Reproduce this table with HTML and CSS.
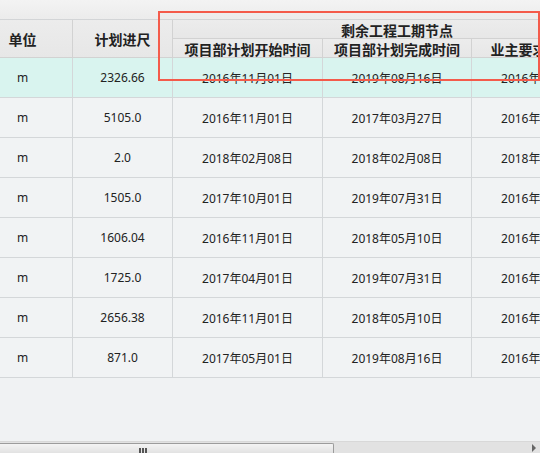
FILE: index.html
```html
<!DOCTYPE html>
<html lang="zh-CN">
<head>
<meta charset="utf-8">
<title>剩余工程工期节点</title>
<link rel="stylesheet" href="styles.css">
</head>
<body>
<div class="sheet">
  <div class="topband"></div>
  <div class="viewport">
    <div class="grid">
      <div class="hd first span2">单位</div>
      <div class="hd span2">计划进尺</div>
      <div class="hd group">剩余工程工期节点</div>
      <div class="hd sub">项目部计划开始时间</div>
      <div class="hd sub">项目部计划完成时间</div>
      <div class="hd sub">业主要求完成时间</div>

      <div class="cell first sel">m</div><div class="cell sel">2326.66</div><div class="cell sel">2016年11月01日</div><div class="cell sel">2019年08月16日</div><div class="cell sel">2016年11月01日</div>
      <div class="cell first">m</div><div class="cell">5105.0</div><div class="cell">2016年11月01日</div><div class="cell">2017年03月27日</div><div class="cell">2016年11月01日</div>
      <div class="cell first">m</div><div class="cell">2.0</div><div class="cell">2018年02月08日</div><div class="cell">2018年02月08日</div><div class="cell">2018年02月08日</div>
      <div class="cell first">m</div><div class="cell">1505.0</div><div class="cell">2017年10月01日</div><div class="cell">2019年07月31日</div><div class="cell">2016年11月01日</div>
      <div class="cell first">m</div><div class="cell">1606.04</div><div class="cell">2016年11月01日</div><div class="cell">2018年05月10日</div><div class="cell">2016年11月01日</div>
      <div class="cell first">m</div><div class="cell">1725.0</div><div class="cell">2017年04月01日</div><div class="cell">2019年07月31日</div><div class="cell">2016年11月01日</div>
      <div class="cell first">m</div><div class="cell">2656.38</div><div class="cell">2016年11月01日</div><div class="cell">2018年05月10日</div><div class="cell">2016年11月01日</div>
      <div class="cell first">m</div><div class="cell">871.0</div><div class="cell">2017年05月01日</div><div class="cell">2019年08月16日</div><div class="cell">2016年11月01日</div>
    </div>
  </div>
  <div class="fill"></div>
  <div class="hscroll">
    <div class="thumb"><span class="grip"></span></div>
    <div class="track"></div>
    <div class="arrow"></div>
  </div>
  <div class="annot"></div>
</div>
</body>
</html>
```
FILE: styles.css
```css
* { box-sizing: border-box; }
html, body { margin: 0; padding: 0; }
body {
  width: 540px;
  height: 453px;
  overflow: hidden;
  background: #f0f2f3;
  font-family: "Noto Sans", "Noto Sans CJK SC", sans-serif;
  color: #222;
}
.sheet {
  position: relative;
  display: flex;
  flex-direction: column;
  height: 453px;
}
.topband {
  height: 19px;
  flex: none;
  background: linear-gradient(#f3f3f3, #ececec);
}
.viewport {
  flex: none;
  overflow: hidden;
  width: 540px;
}
.grid {
  display: grid;
  width: 622px;
  grid-template-columns: 73px 100px 150px 149px 150px;
  grid-template-rows: 19px 19px repeat(8, 40px);
  border-top: 1px solid #d3d5d7;
}
.hd, .cell {
  border-right: 1px solid #d4d7d9;
  border-bottom: 1px solid #d4d7d9;
  display: flex;
  align-items: center;
  justify-content: center;
  white-space: nowrap;
}
.hd {
  background: linear-gradient(#ececec, #e7e7e7);
  font-size: 14px;
  font-weight: bold;
  border-color: #d2d2d2;
  padding-top: 1px;
}
.span2 { grid-row: span 2; }
.group { grid-column: span 3; padding-top: 2px; }
.sub { padding-top: 2px; }
.cell {
  font-size: 12px;
  background: #f1f3f4;
}
.cell.sel { background: #d9f4ef; }
.first { padding-right: 27px; }
.fill { flex: 1; }
.hscroll {
  flex: none;
  height: 12px;
  display: flex;
  background: #e2e2e2;
  border-top: 1px solid #d8d8d8;
}
.thumb {
  width: 334px;
  margin-top: 1px;
  border-top: 1px solid #9c9c9c;
  border-right: 1px solid #9c9c9c;
  border-top-right-radius: 2px;
  background: linear-gradient(#f4f4f4, #e2e2e2);
  display: flex;
  justify-content: flex-start;
  padding-left: 139px;
  padding-top: 4px;
}
.grip {
  width: 8px;
  height: 6px;
  background: repeating-linear-gradient(90deg, #555 0 2px, transparent 2px 3px);
}
.track { flex: 1; }
.arrow {
  align-self: flex-end;
  margin-right: 4px;
  margin-bottom: 1px;
  width: 0;
  height: 0;
  border-left: 4px solid #666;
  border-top: 4px solid transparent;
  border-bottom: 4px solid transparent;
}
.annot {
  position: absolute;
  left: 158px;
  top: 11px;
  width: 382px;
  height: 70px;
  border: 2px solid #f45b4b;
  pointer-events: none;
}
```
